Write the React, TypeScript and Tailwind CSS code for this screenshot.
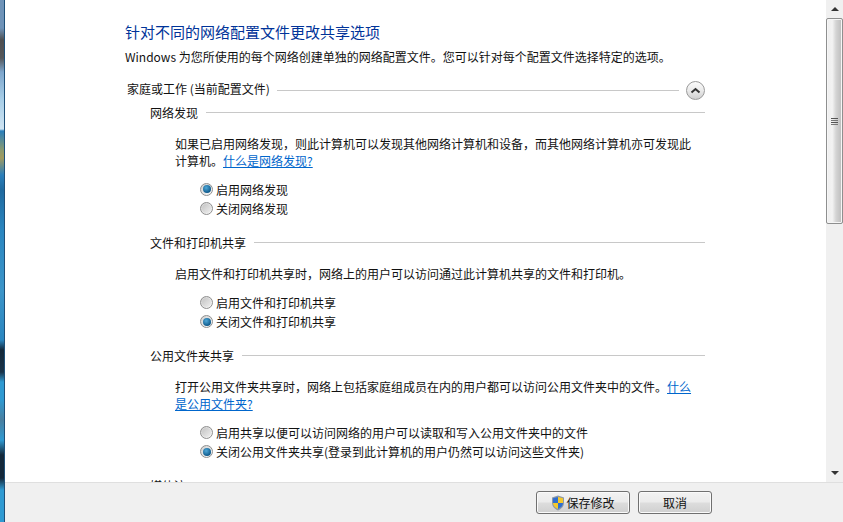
const FONT = "font-['Noto_Sans_CJK_SC','Noto_Sans',sans-serif]";

function Radio({ checked, label }: { checked?: boolean; label: string }) {
  return (
    <div className="flex h-[19.5px] items-center gap-[3px] pl-[25px]">
      <span className="flex h-[13px] w-[13px] items-center justify-center rounded-full border border-[#8f8f8f] bg-gradient-to-br from-[#d0d0d0] to-[#fafafa]">
        {checked ? (
          <span className="h-[8px] w-[8px] rounded-full bg-[radial-gradient(circle_at_40%_35%,#4fa8d8,#0b5688_75%)]" />
        ) : (
          <span className="h-[9px] w-[9px] rounded-full bg-gradient-to-br from-[#c4c4c4] to-[#eeeeee]" />
        )}
      </span>
      <span>{label}</span>
    </div>
  );
}

function Rule({ children, className }: { children: React.ReactNode; className: string }) {
  return (
    <div className={`flex items-center gap-[8px] ${className}`}>
      <span className="whitespace-nowrap">{children}</span>
      <span className="h-px flex-1 bg-[#c8c8c8]" />
    </div>
  );
}

function Link({ children }: { children: React.ReactNode }) {
  return <a className="text-[#0066cc] underline">{children}</a>;
}

function Shield() {
  return (
    <svg width="14" height="16" viewBox="0 0 14 16">
      <path d="M7 .5 13 2.500V8c0 3.600-3 6-6 7.500C4 14 1 11.600 1 8V2.500Z" fill="#8d99a8" />
      <path d="M7 2 7 8H2V3.300Z" fill="#2f6fd0" />
      <path d="M7 2 12 3.300V8H7Z" fill="#f4c92c" />
      <path d="M2 8H7V14C4.500 12.800 2 11 2 8Z" fill="#f4c92c" />
      <path d="M12 8H7V14C9.500 12.800 12 11 12 8Z" fill="#2f6fd0" />
    </svg>
  );
}

function Btn({ children, className }: { children: React.ReactNode; className: string }) {
  return (
    <button className={`flex h-[23px] items-center justify-center gap-px rounded-[3px] border border-[#707070] bg-[linear-gradient(#f2f2f2,#ebebeb_48%,#dddddd_52%,#cfcfcf)] text-[12px] text-[#111] shadow-[inset_0_0_0_1px_#fafafa] ${className}`}>
      {children}
    </button>
  );
}

function Scrollbar() {
  return (
    <div className="flex w-[17px] flex-col bg-[#f0f0f0]">
      <div className="flex h-[18px] items-center justify-center">
        <span className="h-0 w-0 border-x-[4px] border-b-[4px] border-x-transparent border-b-[#333]" />
      </div>
      <div className="flex h-[206px] items-center justify-center rounded-[2px] border border-[#8e8f8f] bg-[linear-gradient(90deg,#eeeeee,#f3f3f3_35%,#d4d4d4_60%,#bcbcbc)] shadow-[inset_0_0_0_1px_#f6f6f6]">
        <span className="flex flex-col gap-px">
          <span className="h-px w-[7px] bg-[#555]" />
          <span className="h-px w-[7px] bg-[#777]" />
          <span className="h-px w-[7px] bg-[#555]" />
          <span className="h-px w-[7px] bg-[#777]" />
        </span>
      </div>
      <div className="flex-1" />
      <div className="flex h-[18px] items-center justify-center">
        <span className="h-0 w-0 border-x-[4px] border-t-[4px] border-x-transparent border-t-[#333]" />
      </div>
    </div>
  );
}

export default function App() {
  return (
    <div className={`flex h-[522px] w-[843px] overflow-hidden bg-white text-[12px] leading-[17px] text-[#111] ${FONT}`}>
      <div className="h-full w-[5px] border-r border-[#1d4f78] bg-[linear-gradient(#6f93b8_0px,#6f93b8_28px,#4f4f50_40px,#55575a_58px,#7ea6cc_72px,#a9cfe8_100px,#cfe4f2_129px,#2a7fbb_131px,#8a9a70_150px,#a09a60_158px,#2a7fbb_175px,#1f6a9f_190px,#2a86c0_230px,#3c95c9_290px,#2a86c0_340px,#14283a_350px,#1a3348_372px,#2f9ad2_382px,#2f9ad2_400px,#4a7f9f_420px,#2f9ad2_440px,#14283a_455px,#14283a_478px,#2f9ad2_490px,#2f9ad2_522px)]" />
      <div className="flex min-w-0 flex-1 flex-col">
        <div className="flex h-[482px]">
          <div className="min-w-0 flex-1 overflow-hidden pl-[120px] pr-[121px] pt-[22px]">
            <h1 className="text-[15px] leading-[20px] font-normal text-[#003399]">针对不同的网络配置文件更改共享选项</h1>
            <p className="mt-[6px] whitespace-nowrap">Windows 为您所使用的每个网络创建单独的网络配置文件。您可以针对每个配置文件选择特定的选项。</p>
            <div className="mt-[16px] flex h-[19px] items-center gap-[7px] pl-[2px]">
              <span className="mb-[4px] whitespace-nowrap">家庭或工作 (当前配置文件)</span>
              <span className="h-px flex-1 bg-[#c8c8c8]" />
              <span className="flex h-[19px] w-[19px] items-center justify-center rounded-full border border-[#9a9a9a] bg-[linear-gradient(#fbfbfb,#e8e8e8_55%,#cfcfcf)]">
                <svg width="11" height="7" viewBox="0 0 11 7">
                  <path d="M1.500 5.500 5.500 2l4 3.500" fill="none" stroke="#333" strokeWidth="2" />
                </svg>
              </span>
            </div>
            <div className="pl-[25px]">
              <Rule className="mt-[4px]">网络发现</Rule>
              <div className="pl-[25px] pr-[8px]">
                <p className="mt-[14px]">如果已启用网络发现，则此计算机可以发现其他网络计算机和设备，而其他网络计算机亦可发现此计算机。<Link>什么是网络发现?</Link></p>
                <div className="mt-[10.5px]">
                  <Radio checked label="启用网络发现" />
                  <Radio label="关闭网络发现" />
                </div>
              </div>
              <Rule className="mt-[15.5px]">文件和打印机共享</Rule>
              <div className="pl-[25px] pr-[8px]">
                <p className="mt-[14px]">启用文件和打印机共享时，网络上的用户可以访问通过此计算机共享的文件和打印机。</p>
                <div className="mt-[10.5px]">
                  <Radio label="启用文件和打印机共享" />
                  <Radio checked label="关闭文件和打印机共享" />
                </div>
              </div>
              <Rule className="mt-[15.5px]">公用文件夹共享</Rule>
              <div className="pl-[25px] pr-[8px]">
                <p className="mt-[14px]">打开公用文件夹共享时，网络上包括家庭组成员在内的用户都可以访问公用文件夹中的文件。<Link>什么是公用文件夹?</Link></p>
                <div className="mt-[10.5px]">
                  <Radio label="启用共享以便可以访问网络的用户可以读取和写入公用文件夹中的文件" />
                  <Radio checked label="关闭公用文件夹共享(登录到此计算机的用户仍然可以访问这些文件夹)" />
                </div>
              </div>
              <Rule className="mt-[15px]">媒体流</Rule>
            </div>
          </div>
          <Scrollbar />
        </div>
        <div className="flex h-[40px] items-center justify-end gap-[8px] border-t border-[#dfdfdf] bg-[#f0f0f0] pr-[131px]">
          <Btn className="w-[94px]"><Shield />保存修改</Btn>
          <Btn className="w-[74px]">取消</Btn>
        </div>
      </div>
    </div>
  );
}
